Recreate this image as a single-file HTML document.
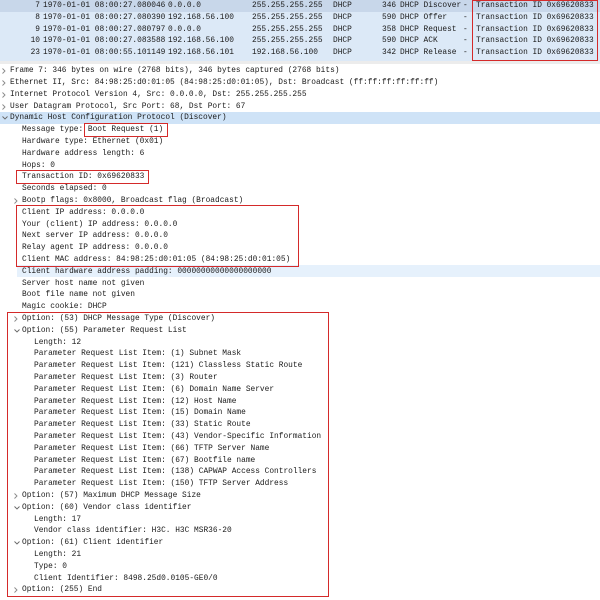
<!DOCTYPE html>
<html><head><meta charset="utf-8"><style>
body{margin:0;width:600px;height:600px;overflow:hidden;background:#fff;font-family:"Liberation Mono",monospace;font-size:7.85px;color:#1a1a1a;position:relative}
.r{position:absolute;left:0;width:600px;height:11.8px;line-height:11.8px;white-space:pre}
.r span{position:absolute;top:0}
.l{position:absolute;height:11.8px;line-height:11.8px;white-space:pre;left:0;width:600px}
.a{position:absolute;top:3px;width:4px;height:4px}
.box{position:absolute;border:1.6px solid #d42a2a;box-sizing:border-box}
</style></head><body>
<div style="position:absolute;left:0;top:0;width:600px;height:61px;background:#dce9f7"></div>
<div style="position:absolute;left:0;top:0;width:600px;height:11.5px;background:#c8d7ea"></div>
<div style="position:absolute;left:0;top:61px;width:600px;height:3px;background:#ececec"></div>

<div class="r" style="top:0"><span style="right:560px">7</span><span style="left:43px">1970-01-01 08:00:27.080046</span><span style="left:168px">0.0.0.0</span><span style="left:252px">255.255.255.255</span><span style="left:333px">DHCP</span><span style="left:382px">346</span><span style="left:400px">DHCP Discover</span><span style="left:463px">-</span><span style="left:476px">Transaction ID 0x69620833</span></div>
<div class="r" style="top:11.8px"><span style="right:560px">8</span><span style="left:43px">1970-01-01 08:00:27.080390</span><span style="left:168px">192.168.56.100</span><span style="left:252px">255.255.255.255</span><span style="left:333px">DHCP</span><span style="left:382px">590</span><span style="left:400px">DHCP Offer</span><span style="left:463px">-</span><span style="left:476px">Transaction ID 0x69620833</span></div>
<div class="r" style="top:23.6px"><span style="right:560px">9</span><span style="left:43px">1970-01-01 08:00:27.080797</span><span style="left:168px">0.0.0.0</span><span style="left:252px">255.255.255.255</span><span style="left:333px">DHCP</span><span style="left:382px">358</span><span style="left:400px">DHCP Request</span><span style="left:463px">-</span><span style="left:476px">Transaction ID 0x69620833</span></div>
<div class="r" style="top:35.4px"><span style="right:560px">10</span><span style="left:43px">1970-01-01 08:00:27.083588</span><span style="left:168px">192.168.56.100</span><span style="left:252px">255.255.255.255</span><span style="left:333px">DHCP</span><span style="left:382px">590</span><span style="left:400px">DHCP ACK</span><span style="left:463px">-</span><span style="left:476px">Transaction ID 0x69620833</span></div>
<div class="r" style="top:47.2px"><span style="right:560px">23</span><span style="left:43px">1970-01-01 08:00:55.101149</span><span style="left:168px">192.168.56.101</span><span style="left:252px">192.168.56.100</span><span style="left:333px">DHCP</span><span style="left:382px">342</span><span style="left:400px">DHCP Release</span><span style="left:463px">-</span><span style="left:476px">Transaction ID 0x69620833</span></div>
<div class="box" style="left:472px;top:0;width:126px;height:61px"></div>

<div style="position:absolute;left:0;top:112px;width:600px;height:11.8px;background:#cfe3f7"></div>
<div style="position:absolute;left:17px;top:265px;width:583px;height:11.8px;background:#e6f1fc"></div>

<div id="d"></div>
<script>
const L=[
[0,'>','Frame 7: 346 bytes on wire (2768 bits), 346 bytes captured (2768 bits)'],
[0,'>','Ethernet II, Src: 84:98:25:d0:01:05 (84:98:25:d0:01:05), Dst: Broadcast (ff:ff:ff:ff:ff:ff)'],
[0,'>','Internet Protocol Version 4, Src: 0.0.0.0, Dst: 255.255.255.255'],
[0,'>','User Datagram Protocol, Src Port: 68, Dst Port: 67'],
[0,'v','Dynamic Host Configuration Protocol (Discover)'],
[1,'','Message type: Boot Request (1)'],
[1,'','Hardware type: Ethernet (0x01)'],
[1,'','Hardware address length: 6'],
[1,'','Hops: 0'],
[1,'','Transaction ID: 0x69620833'],
[1,'','Seconds elapsed: 0'],
[1,'>','Bootp flags: 0x8000, Broadcast flag (Broadcast)'],
[1,'','Client IP address: 0.0.0.0'],
[1,'','Your (client) IP address: 0.0.0.0'],
[1,'','Next server IP address: 0.0.0.0'],
[1,'','Relay agent IP address: 0.0.0.0'],
[1,'','Client MAC address: 84:98:25:d0:01:05 (84:98:25:d0:01:05)'],
[1,'','Client hardware address padding: 00000000000000000000'],
[1,'','Server host name not given'],
[1,'','Boot file name not given'],
[1,'','Magic cookie: DHCP'],
[1,'>','Option: (53) DHCP Message Type (Discover)'],
[1,'v','Option: (55) Parameter Request List'],
[2,'','Length: 12'],
[2,'','Parameter Request List Item: (1) Subnet Mask'],
[2,'','Parameter Request List Item: (121) Classless Static Route'],
[2,'','Parameter Request List Item: (3) Router'],
[2,'','Parameter Request List Item: (6) Domain Name Server'],
[2,'','Parameter Request List Item: (12) Host Name'],
[2,'','Parameter Request List Item: (15) Domain Name'],
[2,'','Parameter Request List Item: (33) Static Route'],
[2,'','Parameter Request List Item: (43) Vendor-Specific Information'],
[2,'','Parameter Request List Item: (66) TFTP Server Name'],
[2,'','Parameter Request List Item: (67) Bootfile name'],
[2,'','Parameter Request List Item: (138) CAPWAP Access Controllers'],
[2,'','Parameter Request List Item: (150) TFTP Server Address'],
[1,'>','Option: (57) Maximum DHCP Message Size'],
[1,'v','Option: (60) Vendor class identifier'],
[2,'','Length: 17'],
[2,'','Vendor class identifier: H3C. H3C MSR36-20'],
[1,'v','Option: (61) Client identifier'],
[2,'','Length: 21'],
[2,'','Type: 0'],
[2,'','Client Identifier: 8498.25d0.0105-GE0/0'],
[1,'>','Option: (255) End']];
let h='';const X=[10,22,34];
const R='<svg class="a" viewBox="0 0 4 6" style="width:4px;height:6px"><path d="M0.5 0.5L3 3L0.5 5.5" fill="none" stroke="#888" stroke-width="0.9"/></svg>';
const D='<svg class="a" viewBox="0 0 6 4" style="width:6px;height:4px;top:4px"><path d="M0.5 0.5L3 3L5.5 0.5" fill="none" stroke="#666" stroke-width="0.9"/></svg>';
L.forEach((e,i)=>{const t=65.1+i*11.8;
let ic='';if(e[1]){ic=(e[1]=='v'?D:R).replace('class="a"',`class="a" `).replace('style="',`style="left:${X[e[0]]-8}px;`);}
h+=`<div class="l" style="top:${t}px">`+ic+`<span style="position:absolute;left:${X[e[0]]}px">${e[2]}</span></div>`;});
document.getElementById('d').innerHTML=h;
</script>
<div class="box" style="left:84px;top:123px;width:84px;height:14px"></div>
<div class="box" style="left:16px;top:170px;width:133px;height:14px"></div>
<div class="box" style="left:16px;top:205px;width:283px;height:62px"></div>
<div class="box" style="left:7px;top:312px;width:322px;height:285px"></div>
</body></html>
